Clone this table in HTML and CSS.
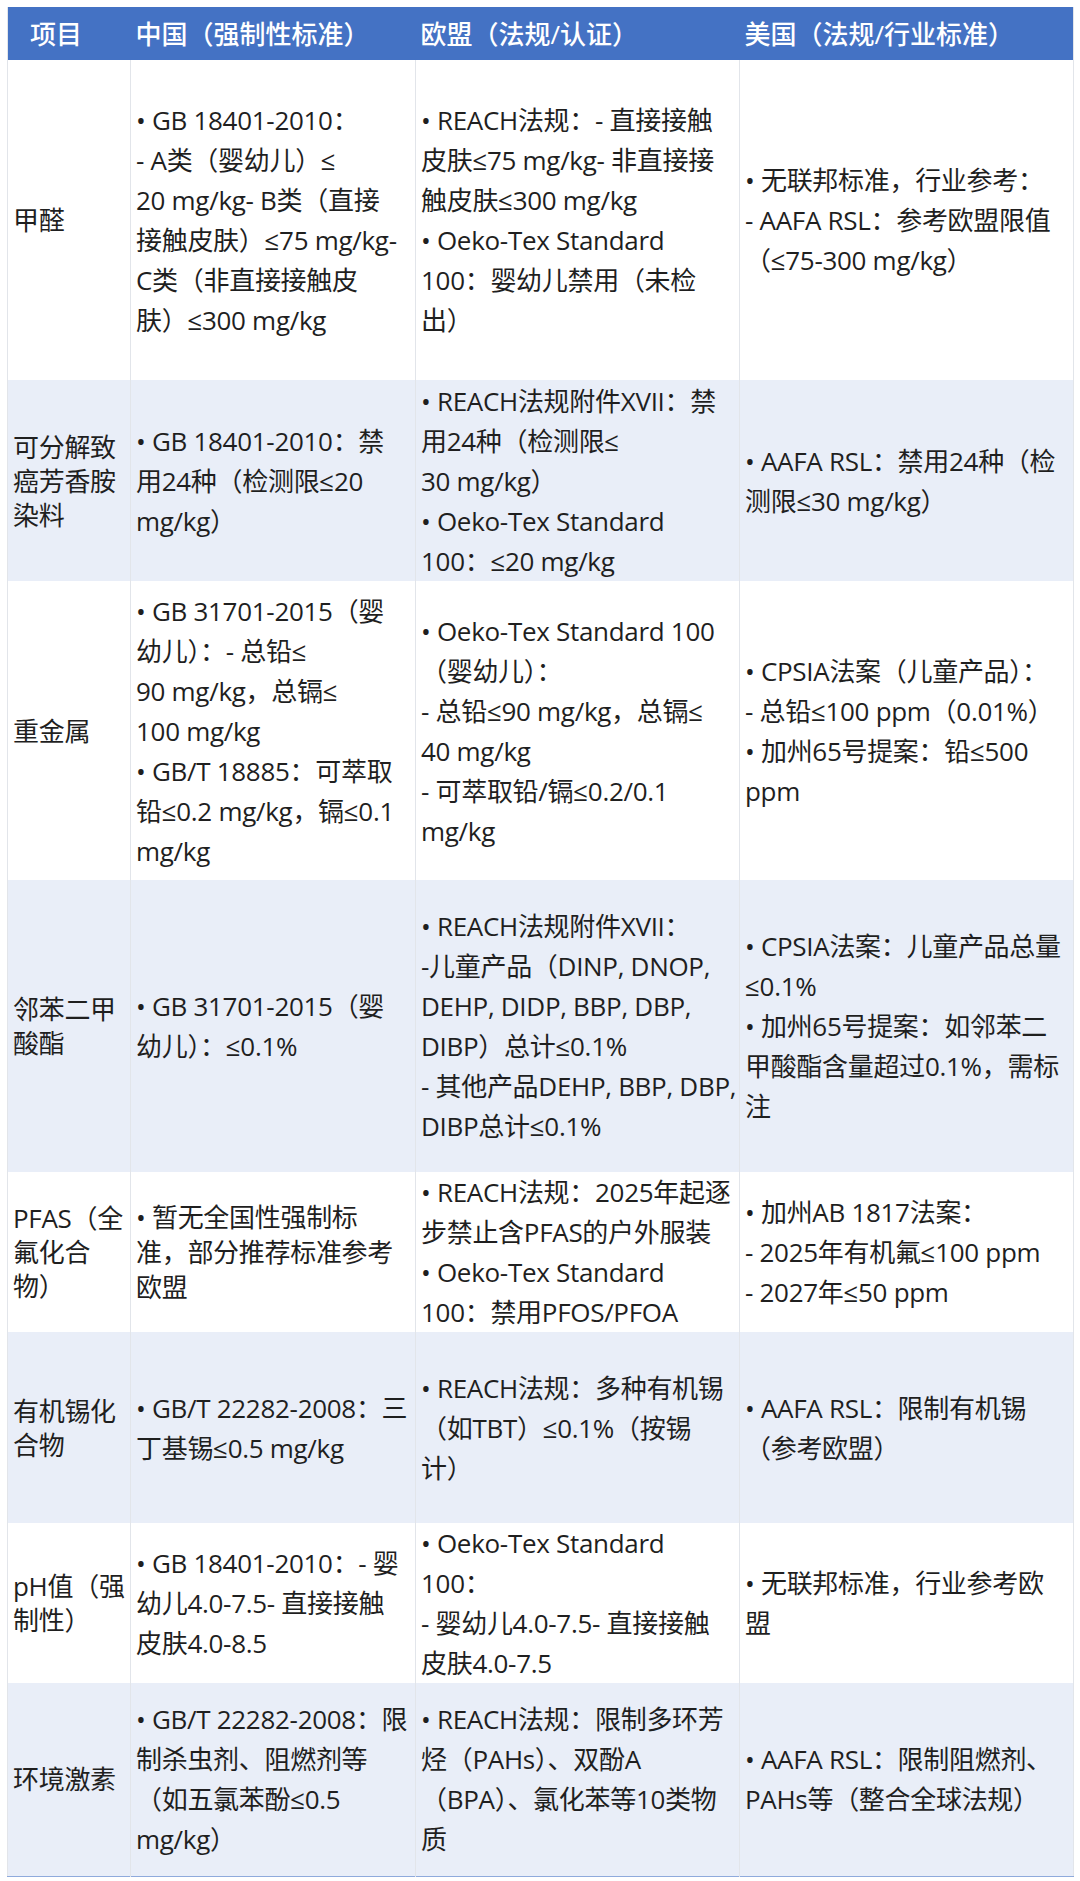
FILE: index.html
```html
<!DOCTYPE html>
<html lang="zh-CN">
<head>
<meta charset="utf-8">
<title>纺织品有害物质限量标准对比</title>
<link rel="stylesheet" href="styles.css">
</head>
<body>
<table class="cmp">
  <colgroup>
    <col class="c-item"><col class="c-cn"><col class="c-eu"><col class="c-us">
  </colgroup>
  <thead>
    <tr class="head">
      <th class="first">项目</th>
      <th>中国（强制性标准）</th>
      <th>欧盟（法规/认证）</th>
      <th>美国（法规/行业标准）</th>
    </tr>
  </thead>
  <tbody>
    <tr class="r1">
      <td class="item">甲醛</td>
      <td>• GB 18401-2010：<br>- A类（婴幼儿）≤<br>20 mg/kg- B类（直接<br>接触皮肤）≤75 mg/kg-<br>C类（非直接接触皮<br>肤）≤300 mg/kg</td>
      <td>• REACH法规：- 直接接触<br>皮肤≤75 mg/kg- 非直接接<br>触皮肤≤300 mg/kg<br>• Oeko-Tex Standard<br>100：婴幼儿禁用（未检<br>出）</td>
      <td>• 无联邦标准，行业参考：<br>- AAFA RSL：参考欧盟限值<br>（≤75-300 mg/kg）</td>
    </tr>
    <tr class="r2 alt">
      <td class="item">可分解致<br>癌芳香胺<br>染料</td>
      <td>• GB 18401-2010：禁<br>用24种（检测限≤20<br>mg/kg）</td>
      <td>• REACH法规附件XVII：禁<br>用24种（检测限≤<br>30 mg/kg）<br>• Oeko-Tex Standard<br>100：≤20 mg/kg</td>
      <td>• AAFA RSL：禁用24种（检<br>测限≤30 mg/kg）</td>
    </tr>
    <tr class="r3">
      <td class="item">重金属</td>
      <td>• GB 31701-2015（婴<br>幼儿）：- 总铅≤<br>90 mg/kg，总镉≤<br>100 mg/kg<br>• GB/T 18885：可萃取<br>铅≤0.2 mg/kg，镉≤0.1<br>mg/kg</td>
      <td>• Oeko-Tex Standard 100<br>（婴幼儿）：<br>- 总铅≤90 mg/kg，总镉≤<br>40 mg/kg<br>- 可萃取铅/镉≤0.2/0.1<br>mg/kg</td>
      <td>• CPSIA法案（儿童产品）：<br>- 总铅≤100 ppm（0.01%）<br>• 加州65号提案：铅≤500<br>ppm</td>
    </tr>
    <tr class="r4 alt">
      <td class="item">邻苯二甲<br>酸酯</td>
      <td>• GB 31701-2015（婴<br>幼儿）：≤0.1%</td>
      <td>• REACH法规附件XVII：<br>-儿童产品（DINP, DNOP,<br>DEHP, DIDP, BBP, DBP,<br>DIBP）总计≤0.1%<br>- 其他产品DEHP, BBP, DBP,<br>DIBP总计≤0.1%</td>
      <td>• CPSIA法案：儿童产品总量<br>≤0.1%<br>• 加州65号提案：如邻苯二<br>甲酸酯含量超过0.1%，需标<br>注</td>
    </tr>
    <tr class="r5">
      <td class="item">PFAS（全<br>氟化合<br>物）</td>
      <td class="cjk">• 暂无全国性强制标<br>准，部分推荐标准参考<br>欧盟</td>
      <td>• REACH法规：2025年起逐<br>步禁止含PFAS的户外服装<br>• Oeko-Tex Standard<br>100：禁用PFOS/PFOA</td>
      <td>• 加州AB 1817法案：<br>- 2025年有机氟≤100 ppm<br>- 2027年≤50 ppm</td>
    </tr>
    <tr class="r6 alt">
      <td class="item">有机锡化<br>合物</td>
      <td>• GB/T 22282-2008：三<br>丁基锡≤0.5 mg/kg</td>
      <td>• REACH法规：多种有机锡<br>（如TBT）≤0.1%（按锡<br>计）</td>
      <td>• AAFA RSL：限制有机锡<br>（参考欧盟）</td>
    </tr>
    <tr class="r7">
      <td class="item">pH值（强<br>制性）</td>
      <td>• GB 18401-2010：- 婴<br>幼儿4.0-7.5- 直接接触<br>皮肤4.0-8.5</td>
      <td>• Oeko-Tex Standard<br>100：<br>- 婴幼儿4.0-7.5- 直接接触<br>皮肤4.0-7.5</td>
      <td>• 无联邦标准，行业参考欧<br>盟</td>
    </tr>
    <tr class="r8 alt">
      <td class="item">环境激素</td>
      <td>• GB/T 22282-2008：限<br>制杀虫剂、阻燃剂等<br>（如五氯苯酚≤0.5<br>mg/kg）</td>
      <td>• REACH法规：限制多环芳<br>烃（PAHs）、双酚A<br>（BPA）、氯化苯等10类物<br>质</td>
      <td>• AAFA RSL：限制阻燃剂、<br>PAHs等（整合全球法规）</td>
    </tr>
  </tbody>
</table>
</body>
</html>
```

FILE: styles.css
```css
html, body {
  margin: 0;
  padding: 0;
  background: #ffffff;
}

body {
  padding: 7px;
  font-family: "Open Sans", "Noto Sans CJK SC", sans-serif;
  font-size: 26px;
  color: #1f1f1f;
}

.cmp {
  width: 1066px;
  table-layout: fixed;
  border-collapse: collapse;
  border-left: 1px solid #e2e5ea;
  border-right: 1px solid #e2e5ea;
  border-bottom: 1px solid #8faadc;
}

.c-item { width: 123px; }
.c-cn { width: 285px; }
.c-eu { width: 324px; }
.c-us { width: 334px; }

.head {
  height: 53px;
  background: #4472c4;
}

.head th {
  color: #ffffff;
  font-weight: 500;
  text-align: left;
  padding: 0 4px 0 5px;
  line-height: 34px;
  white-space: nowrap;
}

.head th.first {
  padding-left: 22px;
}

td {
  vertical-align: middle;
  padding: 0 4px 0 5px;
  line-height: 40px;
  letter-spacing: -0.3px;
  white-space: nowrap;
  border-left: 1px solid #e2e5ea;
}

td.item {
  line-height: 34px;
  border-left: none;
}

td.cjk {
  line-height: 35px;
}

.alt {
  background: #e9eef8;
}

.r1 { height: 320px; }
.r2 { height: 201px; }
.r3 { height: 299px; }
.r4 { height: 292px; }
.r5 { height: 159px; }
.r6 { height: 191px; }
.r7 { height: 159px; }
.r8 { height: 193px; }
```
